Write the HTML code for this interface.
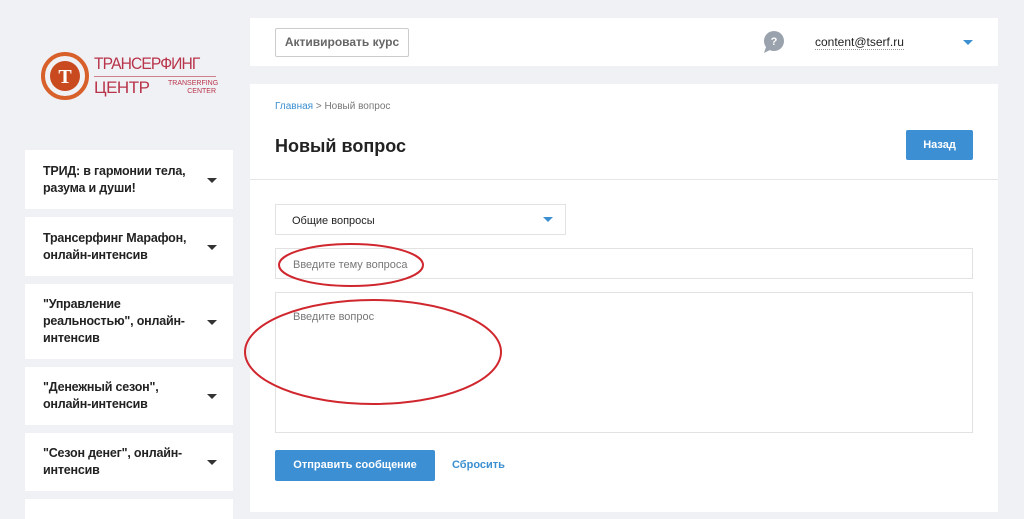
<!DOCTYPE html>
<html><head><meta charset="utf-8"><style>
*{box-sizing:border-box;margin:0;padding:0}
body{width:1024px;height:512px;overflow:hidden;background:#f0f1f5;font-family:"Liberation Sans","DejaVu Sans",sans-serif;position:relative;color:#222}
.abs{position:absolute}
.card{background:#fff}
.side{left:25px;width:208px;background:#fff;font-weight:bold;font-size:12.5px;letter-spacing:-0.2px;line-height:17px;color:#222;padding:0 30px 0 18px;display:flex;align-items:center}
.side:after{content:"";position:absolute;right:16px;top:50%;margin-top:-2px;border:5px solid transparent;border-top:5px solid #333;border-bottom:0}
.ph{color:#777;font-size:11px}
</style></head><body>
<svg class="abs" style="left:40px;top:51px" width="50" height="50"><circle cx="25" cy="25" r="22" fill="none" stroke="#d8602a" stroke-width="4"/><circle cx="25" cy="25" r="15" fill="#c84a1e"/><text x="25" y="32" text-anchor="middle" font-family="Liberation Serif" font-size="20" fill="#fff" font-weight="bold">T</text></svg>
<div class="abs" style="left:94px;top:54px;color:#b8344a;font-size:17px;letter-spacing:-1px;transform:scaleX(0.92);transform-origin:left">ТРАНСЕРФИНГ</div>
<div class="abs" style="left:94px;top:76px;width:122px;height:1px;background:#b8344a;opacity:.6"></div>
<div class="abs" style="left:94px;top:78px;color:#b8344a;font-size:17px;letter-spacing:-0.5px">ЦЕНТР</div>
<div class="abs" style="left:168px;top:80px;color:#b8344a;font-size:7px;text-align:right;width:48px;line-height:8px">TRANSERFING<br>CENTER</div>

<div class="abs side" style="top:150px;height:59px">ТРИД: в гармонии тела, разума и души!</div>
<div class="abs side" style="top:217px;height:59px">Трансерфинг Марафон, онлайн-интенсив</div>
<div class="abs side" style="top:284px;height:75px">"Управление реальностью", онлайн-интенсив</div>
<div class="abs side" style="top:367px;height:58px">"Денежный сезон", онлайн-интенсив</div>
<div class="abs side" style="top:433px;height:58px">"Сезон денег", онлайн-интенсив</div>
<div class="abs" style="left:25px;top:499px;width:208px;height:20px;background:#fff"></div>

<div class="abs card" style="left:250px;top:18px;width:748px;height:48px"></div>
<div class="abs" style="left:275px;top:28px;width:134px;height:29px;border:1px solid #ccc;border-radius:2px;font-size:12px;font-weight:bold;color:#666;text-align:center;line-height:27px">Активировать курс</div>
<svg class="abs" style="left:761px;top:30px" width="26" height="24"><circle cx="13" cy="11" r="10" fill="#9aa3ad"/><path d="M5 17 L3 23 L11 19Z" fill="#9aa3ad"/><text x="13" y="15" text-anchor="middle" font-size="11" font-weight="bold" fill="#fff">?</text></svg>
<div class="abs" style="left:815px;top:35px;font-size:12px;color:#222;border-bottom:1px dotted #999">content@tserf.ru</div>
<div class="abs" style="left:963px;top:40px;border:5px solid transparent;border-top:5px solid #3c8fd0;border-bottom:0"></div>

<div class="abs card" style="left:250px;top:84px;width:748px;height:428px"></div>
<div class="abs" style="left:275px;top:101px;font-size:10px;color:#777"><span style="color:#3c8fd0">Главная</span> &gt; Новый вопрос</div>
<div class="abs" style="left:275px;top:136px;font-size:18px;font-weight:bold;color:#222">Новый вопрос</div>
<div class="abs" style="left:906px;top:130px;width:67px;height:30px;background:#3d8fd4;color:#fff;font-size:11px;font-weight:bold;text-align:center;line-height:30px;border-radius:2px">Назад</div>
<div class="abs" style="left:250px;top:179px;width:748px;height:1px;background:#e6e6e6"></div>
<div class="abs" style="left:275px;top:204px;width:291px;height:31px;border:1px solid #e2e2e2;font-size:11px;padding:10px 16px;color:#222">Общие вопросы</div>
<div class="abs" style="left:543px;top:217px;border:5px solid transparent;border-top:5px solid #3c8fd0;border-bottom:0"></div>
<div class="abs ph" style="left:275px;top:248px;width:698px;height:31px;border:1px solid #e2e2e2;padding:10px 17px">Введите тему вопроса</div>
<div class="abs ph" style="left:275px;top:292px;width:698px;height:141px;border:1px solid #e2e2e2;padding:18px 17px">Введите вопрос</div>
<svg class="abs" style="left:0;top:0" width="1024" height="512"><ellipse cx="351" cy="265" rx="72" ry="21" fill="none" stroke="#d0272e" stroke-width="2"/><ellipse cx="373" cy="352" rx="128" ry="52" fill="none" stroke="#d0272e" stroke-width="2"/></svg>
<div class="abs" style="left:275px;top:450px;width:160px;height:31px;background:#3d8fd4;color:#fff;font-size:11px;font-weight:bold;text-align:center;line-height:31px;border-radius:2px">Отправить сообщение</div>
<div class="abs" style="left:452px;top:459px;font-size:11px;font-weight:bold;color:#3c8fd0">Сбросить</div>
</body></html>
